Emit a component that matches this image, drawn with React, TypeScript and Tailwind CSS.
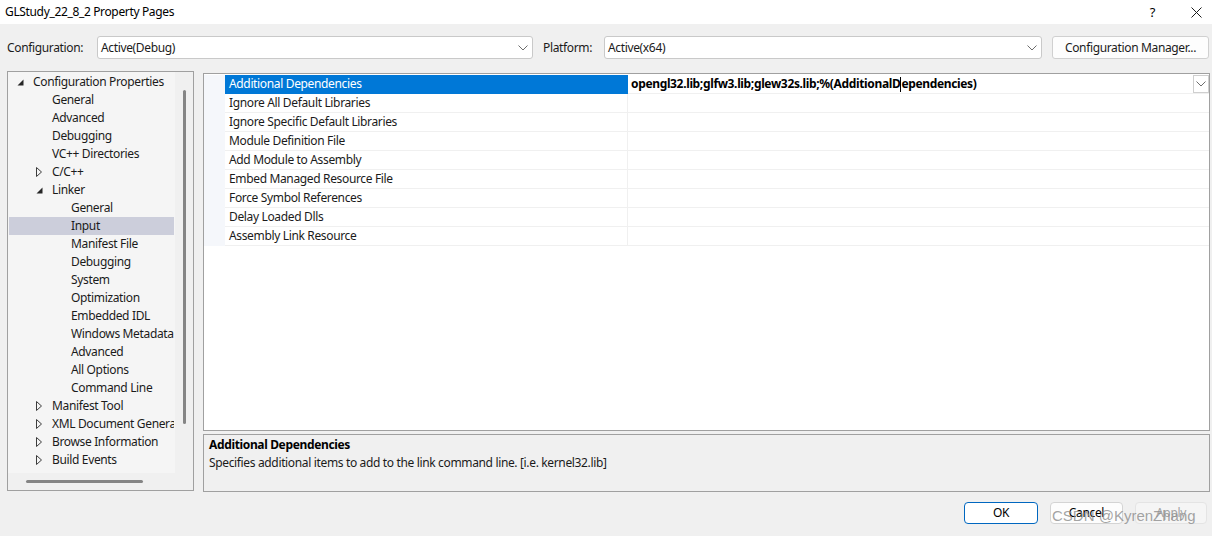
import React from "react";

type TreeRow = {
  label: string;
  level: 0 | 1 | 2;
  glyph?: "open" | "closed";
  selected?: boolean;
};

const treeRows: TreeRow[] = [
  { label: "Configuration Properties", level: 0, glyph: "open" },
  { label: "General", level: 1 },
  { label: "Advanced", level: 1 },
  { label: "Debugging", level: 1 },
  { label: "VC++ Directories", level: 1 },
  { label: "C/C++", level: 1, glyph: "closed" },
  { label: "Linker", level: 1, glyph: "open" },
  { label: "General", level: 2 },
  { label: "Input", level: 2, selected: true },
  { label: "Manifest File", level: 2 },
  { label: "Debugging", level: 2 },
  { label: "System", level: 2 },
  { label: "Optimization", level: 2 },
  { label: "Embedded IDL", level: 2 },
  { label: "Windows Metadata", level: 2 },
  { label: "Advanced", level: 2 },
  { label: "All Options", level: 2 },
  { label: "Command Line", level: 2 },
  { label: "Manifest Tool", level: 1, glyph: "closed" },
  { label: "XML Document Generator", level: 1, glyph: "closed" },
  { label: "Browse Information", level: 1, glyph: "closed" },
  { label: "Build Events", level: 1, glyph: "closed" },
];

const levelPad = ["pl-[8px]", "pl-[27px]", "pl-[46px]"];

const properties = [
  "Additional Dependencies",
  "Ignore All Default Libraries",
  "Ignore Specific Default Libraries",
  "Module Definition File",
  "Add Module to Assembly",
  "Embed Managed Resource File",
  "Force Symbol References",
  "Delay Loaded Dlls",
  "Assembly Link Resource",
];

function Chevron() {
  return (
    <svg width="10" height="6" viewBox="0 0 10 6" className="shrink-0">
      <polyline points="0.5,0.5 5,5 9.5,0.5" fill="none" stroke="#6d6d6d" strokeWidth="1" />
    </svg>
  );
}

function Glyph({ kind }: { kind?: "open" | "closed" }) {
  if (kind === "open") {
    return (
      <svg width="7" height="7" viewBox="0 0 7 7">
        <polygon points="6.5,0.5 6.5,6.5 0.5,6.5" fill="#262626" />
      </svg>
    );
  }
  if (kind === "closed") {
    return (
      <svg width="6" height="10" viewBox="0 0 6 10">
        <polygon points="0.5,0.5 5.5,5 0.5,9.5" fill="none" stroke="#3c3c3c" strokeWidth="1" />
      </svg>
    );
  }
  return null;
}

function ComboBox({ value, className }: { value: string; className: string }) {
  return (
    <div
      className={`flex h-[23px] items-center justify-between rounded-[3px] border border-[#c9c9c9] bg-white pl-[3px] pr-[4px] ${className}`}
    >
      <span>{value}</span>
      <Chevron />
    </div>
  );
}

export default function App() {
  return (
    <div className="relative h-[536px] w-[1212px] overflow-hidden bg-[#f0f0f0] font-['Noto_Sans',sans-serif] text-[12px] leading-[16px] tracking-[-0.35px] text-[#1b1b1b]">
      {/* title bar */}
      <div className="flex h-[24px] items-center bg-white pl-[5px] pr-[10px]">
        <span className="text-black">GLStudy_22_8_2 Property Pages</span>
        <span className="ml-auto mr-[36px] text-[13px] text-black">?</span>
        <svg width="11" height="11" viewBox="0 0 11 11">
          <path d="M0.5 0.5 L10.5 10.5 M10.5 0.5 L0.5 10.5" stroke="#1b1b1b" strokeWidth="1" />
        </svg>
      </div>

      {/* configuration row */}
      <div className="mt-[12px] flex h-[23px] items-center pl-[7px]">
        <span className="w-[90px]">Configuration:</span>
        <ComboBox value="Active(Debug)" className="w-[436px]" />
        <span className="ml-[10px] w-[61px]">Platform:</span>
        <ComboBox value="Active(x64)" className="w-[438px]" />
        <div className="ml-[10px] flex h-[23px] w-[157px] items-center justify-center rounded-[3px] border border-[#d0d0d0] bg-[#fdfdfd]">
          Configuration Manager...
        </div>
      </div>

      {/* main area */}
      <div className="mt-[12px] flex pl-[7px]">
        {/* tree */}
        <div className="flex h-[420px] w-[187px] flex-col border border-[#a0a0a0]">
          <div className="flex h-[401px]">
            <div className="h-full w-[167px] overflow-hidden bg-[#f5f5f5] pt-[1px]">
              {treeRows.map((r, i) => (
                <div
                  key={i}
                  className={`mx-[1px] flex h-[18px] items-center overflow-hidden whitespace-nowrap ${levelPad[r.level]} ${
                    r.selected ? "bg-[#cccedb]" : ""
                  }`}
                >
                  <span className="flex w-[16px] shrink-0 items-center">
                    <Glyph kind={r.glyph} />
                  </span>
                  <span>{r.label}</span>
                </div>
              ))}
            </div>
            <div className="flex flex-1 justify-center">
              <div className="mt-[18px] h-[334px] w-[3px] rounded-full bg-[#858585]" />
            </div>
          </div>
          <div className="flex flex-1 items-center pl-[18px]">
            <div className="h-[3px] w-[117px] rounded-full bg-[#858585]" />
          </div>
        </div>

        {/* right column */}
        <div className="ml-[9px] flex w-[1007px] flex-col">
          <div className="mt-[2px] h-[358px] border border-[#a0a0a0] bg-white pt-[1px]">
            {properties.map((p, i) => (
              <div key={p} className="flex h-[19px]">
                <div className="w-[21px] shrink-0 bg-[#f5f7fb]" />
                <div
                  className={`flex w-[403px] shrink-0 items-center border-b border-r pl-[4px] ${
                    i === 0
                      ? "border-[#0078d7] bg-[#0078d7] text-white"
                      : "border-[#f0f0f0] text-[#1b1b1b]"
                  }`}
                >
                  {p}
                </div>
                <div className="flex flex-1 items-center border-b border-[#f0f0f0] pl-[3px]">
                  {i === 0 && (
                    <>
                      <span className="font-bold text-black">
                        opengl32.lib;glfw3.lib;glew32s.lib;%(AdditionalD
                      </span>
                      <span className="h-[15px] w-px bg-black" />
                      <span className="font-bold text-black">ependencies)</span>
                      <div className="ml-auto flex h-[18px] w-[16px] items-center justify-center border border-[#cfcfcf] bg-white">
                        <Chevron />
                      </div>
                    </>
                  )}
                </div>
              </div>
            ))}
          </div>

          <div className="mt-[3px] h-[58px] border border-[#a0a0a0] bg-[#f0f0f0] pl-[5px] pt-[2px]">
            <div className="font-bold text-black">Additional Dependencies</div>
            <div className="mt-[2px]">Specifies additional items to add to the link command line. [i.e. kernel32.lib]</div>
          </div>
        </div>
      </div>

      {/* buttons */}
      <div className="mt-[10px] flex justify-end gap-[12px] pr-[5px]">
        <div className="flex h-[22px] w-[74px] items-center justify-center rounded-[4px] border border-[#0067c0] bg-white text-black shadow-[inset_0_0_0_1px_#ffffff]">
          OK
        </div>
        <div className="flex h-[22px] w-[73px] items-center justify-center rounded-[4px] border border-[#d4d4d4] bg-[#fdfdfd] text-black">
          Cancel
        </div>
        <div className="flex h-[22px] w-[72px] items-center justify-center rounded-[4px] border border-[#e4e4e4] bg-[#f5f5f5] text-[#a3a3a3]">
          Apply
        </div>
      </div>

      {/* watermark */}
      <div className="pointer-events-none absolute left-[1052px] top-[506px] whitespace-nowrap font-['Liberation_Sans',sans-serif] text-[15px] leading-[20px] tracking-normal text-[#8c8c8c]/80">
        CSDN @KyrenZhang
      </div>
    </div>
  );
}
